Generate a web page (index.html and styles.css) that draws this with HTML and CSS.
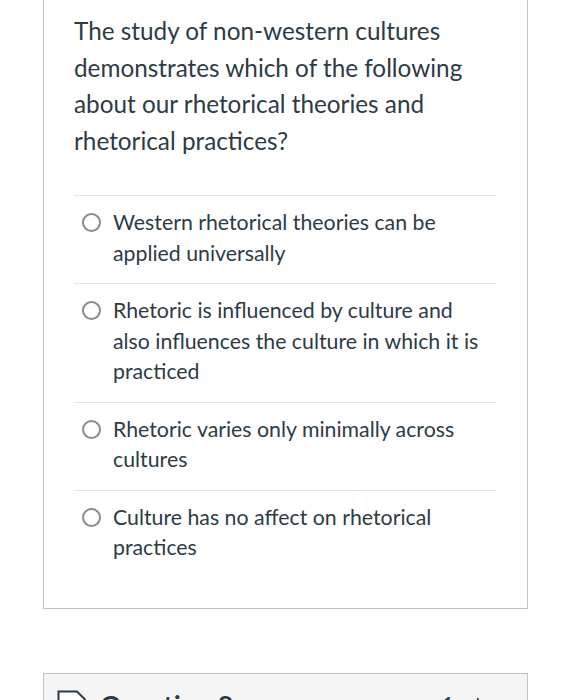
FILE: index.html
```html
<!DOCTYPE html>
<html lang="en">
<head>
<meta charset="utf-8">
<title>Quiz</title>
<link rel="stylesheet" href="styles.css">
</head>
<body>
<div class="card">
  <div class="question-text">The study of non-western cultures demonstrates which of the following about our rhetorical theories and rhetorical practices?</div>
  <div class="answers">
    <label class="answer"><span class="radio"></span><span class="answer-text">Western rhetorical theories can be applied universally</span></label>
    <label class="answer"><span class="radio"></span><span class="answer-text">Rhetoric is influenced by culture and also influences the culture in which it is practiced</span></label>
    <label class="answer"><span class="radio"></span><span class="answer-text">Rhetoric varies only minimally across cultures</span></label>
    <label class="answer"><span class="radio"></span><span class="answer-text">Culture has no affect on rhetorical practices</span></label>
  </div>
</div>
<div class="card card-next">
  <div class="header">
    <svg class="doc-icon" width="30" height="36" viewBox="0 0 30 36"><path d="M1.5 1.5 H20 L28 9.5 V34.5 H1.5 Z" fill="#fff" stroke="#2d3b45" stroke-width="2"/></svg>
    <span class="q-title">Question 8</span>
    <span class="pts">1 pts</span>
  </div>
</div>
</body>
</html>
```
FILE: styles.css
```css
html, body {
  margin: 0;
  padding: 0;
  background: #fff;
}
body {
  font-family: Lato, "Open Sans", sans-serif;
  color: #2d3b45;
  overflow: hidden;
}
.card {
  margin: -20px 0 0 43px;
  width: 483px;
  border: 1px solid #c0c4c7;
  padding: 32px 0 30px 0;
  box-sizing: content-box;
}
.question-text {
  margin: 0 31px 0 30px;
  font-size: 24.3px;
  line-height: 36.5px;
  padding-bottom: 36px;
}
.answers {
  margin: 0 31px 0 30px;
}
.answer {
  display: flex;
  align-items: flex-start;
  border-top: 1px solid #e4e4e4;
  padding: 11px 8px 15px 8px;
  font-size: 21.3px;
  line-height: 30.5px;
}
.radio {
  flex: none;
  width: 15px;
  height: 15px;
  border: 2px solid #8a8a8a;
  border-radius: 50%;
  margin-top: 6px;
  margin-right: 12px;
  background: #fff;
}
.answer-text {
  flex: 1;
}
.card-next {
  margin-top: 64px;
  padding: 0;
  background: #f5f5f5;
}
.header {
  display: flex;
  align-items: flex-start;
  padding: 15px 30px 20px 13px;
}
.doc-icon {
  flex: none;
  margin-top: 1px;
  margin-right: 13px;
}
.q-title {
  font-size: 27px;
  font-weight: 700;
  line-height: 32px;
}
.pts {
  margin-left: auto;
  font-size: 24px;
  line-height: 32px;
  margin-right: 4px;
}
```
